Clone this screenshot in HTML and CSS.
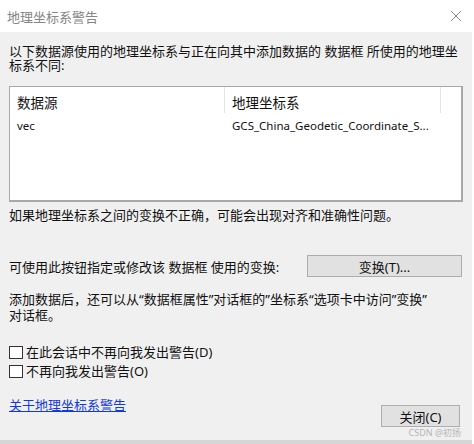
FILE: index.html
```html
<!DOCTYPE html>
<html lang="zh-CN">
<head>
    <meta charset="UTF-8">
    <title>地理坐标系警告</title>
    <link rel="stylesheet" href="styles.css">
</head>
<body>
    <div class="dialog">
        <div class="titlebar">
            <span class="title">地理坐标系警告</span>
            <svg class="close-x" width="12" height="12" viewBox="0 0 12 12">
                <path d="M1 1 L11 11 M11 1 L1 11" stroke="#8a8a8a" stroke-width="1" fill="none"/>
            </svg>
        </div>

        <div class="content">
            <p class="intro">以下数据源使用的地理坐标系与正在向其中添加数据的 数据框 所使用的地理坐标系不同:</p>

            <div class="listbox">
                <div class="list-head">
                    <div class="col col-src">数据源</div>
                    <div class="col col-gcs">地理坐标系</div>
                    <div class="col col-rest"></div>
                </div>
                <div class="list-row">
                    <div class="col col-src">vec</div>
                    <div class="col col-gcs">GCS_China_Geodetic_Coordinate_S...</div>
                </div>
            </div>

            <p class="note">如果地理坐标系之间的变换不正确，可能会出现对齐和准确性问题。</p>

            <div class="transform-row">
                <span>可使用此按钮指定或修改该 数据框 使用的变换:</span>
                <button class="btn btn-wide">变换(T)...</button>
            </div>

            <p class="note note-after">添加数据后，还可以从“数据框属性”对话框的”坐标系“选项卡中访问”变换”对话框。</p>

            <div class="checks">
                <label class="check"><span class="box"></span>在此会话中不再向我发出警告(D)</label>
                <label class="check"><span class="box"></span>不再向我发出警告(O)</label>
            </div>

            <div class="footer">
                <a class="help-link" href="#">关于地理坐标系警告</a>
                <button class="btn btn-close">关闭(C)</button>
            </div>
            <div class="watermark">CSDN @初扬</div>
        </div>
        <div class="bottom-edge"></div>
    </div>
</body>
</html>
```

FILE: styles.css
```css
body {
    margin: 0;
    background: #ffffff;
    font-family: "Noto Sans", "Noto Sans CJK SC", sans-serif;
    font-size: 13px;
    color: #111;
}

.dialog {
    width: 472px;
    height: 444px;
    display: flex;
    flex-direction: column;
}

.titlebar {
    height: 32px;
    background: #ffffff;
    display: flex;
    align-items: center;
    justify-content: space-between;
    padding: 0 10px 0 7px;
}

.title {
    color: #858585;
    font-size: 13px;
}

.content {
    flex: 1;
    background: #f0f0f0;
    padding: 12px 9px 0 9px;
    display: flex;
    flex-direction: column;
}

p {
    margin: 0;
    line-height: 14px;
}

.intro {
    width: 452px;
}

.listbox {
    margin-top: 14px;
    height: 116px;
    width: 454px;
    background: #ffffff;
    border: 2px solid #a8a8a8;
    border-top-width: 1px;
    border-left-width: 1px;
    box-sizing: border-box;
}

.list-head,
.list-row {
    display: flex;
}

.list-head {
    height: 26px;
}

.list-head .col {
    border-right: 1px solid #e5e5e5;
    display: flex;
    align-items: center;
    padding-top: 3px;
    font-size: 13.5px;
}

.list-head .col-rest {
    border-right: none;
}

.list-row {
    height: 24px;
    align-items: center;
    font-size: 11.5px;
}

.col {
    box-sizing: border-box;
    padding-left: 7px;
    white-space: nowrap;
}

.col-src {
    width: 215px;
}

.col-gcs {
    width: 216px;
}

.col-rest {
    flex: 1;
}

.note {
    margin-top: 6px;
}

.transform-row {
    margin-top: 33px;
    height: 22px;
    display: flex;
    align-items: center;
    justify-content: space-between;
}

.btn {
    font-family: inherit;
    font-size: 13px;
    color: #111;
    background: #e1e1e1;
    border: 1px solid #adadad;
    border-radius: 0;
    padding: 0;
    height: 22px;
}

.btn-wide {
    width: 155px;
    margin-right: 1px;
}

.note-after {
    margin-top: 14px;
    line-height: 16px;
    width: 430px;
}

.checks {
    margin-top: 22px;
    display: flex;
    flex-direction: column;
    gap: 5px;
}

.check {
    display: flex;
    align-items: center;
    gap: 3px;
    line-height: 14px;
}

.box {
    width: 12px;
    height: 11px;
    border: 1px solid #333;
    background: #ffffff;
}

.footer {
    margin-top: 20px;
    display: flex;
    justify-content: space-between;
    align-items: flex-start;
}

.help-link {
    color: #1239e0;
    text-decoration: underline;
    line-height: 14px;
}

.btn-close {
    width: 79px;
    margin-right: 3px;
    margin-top: 7px;
}

.watermark {
    align-self: flex-end;
    font-size: 9px;
    color: #b5b5b5;
    line-height: 10px;
    margin-right: 2px;
    margin-top: 1px;
}

.bottom-edge {
    height: 4px;
    background: #d6d6d6;
}
```
